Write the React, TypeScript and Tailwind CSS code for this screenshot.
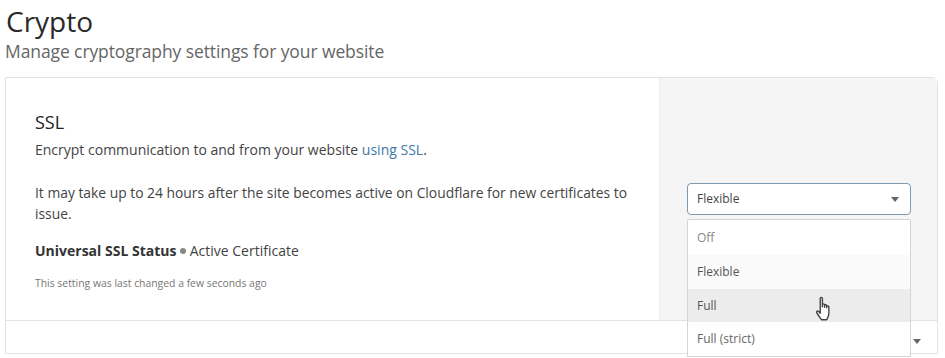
import React from "react";

function Caret({ className = "" }: { className?: string }) {
  return (
    <svg width="8" height="5" viewBox="0 0 8 5" className={className}>
      <path d="M0 0 L8 0 L4 5 Z" fill="#666" />
    </svg>
  );
}

function Hand() {
  return (
    <svg width="18" height="28" viewBox="0 0 16 26" className="absolute left-[127px] top-[76px]">
      <path
        d="M4.5 2.2 C4.5 1 6.5 1 6.5 2.2 L6.5 10 L6.5 8.2 C6.5 7 8.5 7 8.5 8.2 L8.5 10.5 L8.5 9 C8.5 7.9 10.5 7.9 10.5 9 L10.5 11 L10.5 10 C10.5 9 12.5 9 12.5 10 L12.5 16 C12.5 19 11 21 10.5 22 L5.5 22 C4.5 20.5 2 17 1.2 15.5 C0.6 14.4 1.8 13.3 2.8 14.2 L4.5 16 Z"
        fill="#fff"
        stroke="#444"
        strokeWidth="1.3"
        strokeLinejoin="round"
      />
    </svg>
  );
}

export default function App() {
  return (
    <div className="w-[945px] h-[358px] bg-white overflow-hidden relative" style={{ fontFamily: '"Open Sans", "Noto Sans", sans-serif' }}>
      <div className="pl-[5px] pt-[3px]">
        <h1 className="text-[28px] leading-[36px] text-[#2a2a2a] pl-[1px]">Crypto</h1>
        <p className="text-[17.5px] leading-[20px] text-[#666] mt-[2px] tracking-[-0.1px]">Manage cryptography settings for your website</p>
      </div>
      <div className="ml-[5px] mt-[16px] w-[933px] border border-[#e3e3e3] rounded-tr-[6px] rounded-tl-[2px]">
        <div className="flex h-[242px]">
          <div className="flex-1 pl-[29px] pt-[32px] text-[#444]">
            <h2 className="text-[18px] leading-[24px] text-[#222]">SSL</h2>
            <p className="text-[14px] leading-[20px] mt-[6px]">
              Encrypt communication to and from your website{" "}
              <span className="text-[#3f78a8]">using SSL</span>.
            </p>
            <p className="text-[13.85px] leading-[21px] mt-[22px] w-[600px]">
              It may take up to 24 hours after the site becomes active on Cloudflare for new certificates to issue.
            </p>
            <p className="text-[14px] leading-[20px] mt-[17px]">
              <span className="font-bold text-[#333]">Universal SSL Status</span>{" "}
              <span className="inline-block w-[6px] h-[6px] rounded-full bg-[#888] align-middle mb-[2px]"></span>{" "}
              Active Certificate
            </p>
            <p className="text-[10.4px] leading-[14px] text-[#777] mt-[15px]">This setting was last changed a few seconds ago</p>
          </div>
          <div className="w-[278px] bg-[#f5f5f5] border-l border-[#ececec] relative">
            <div className="absolute left-[27px] top-[105px] w-[224px] h-[32px] bg-white border border-[#7d9ab0] rounded-[4px] flex items-center justify-between pl-[9px] pr-[11px]">
              <span className="text-[12px] text-[#444]">Flexible</span>
              <Caret />
            </div>
          </div>
        </div>
        <div className="h-[33px] border-t border-[#e3e3e3] relative">
          <Caret className="absolute left-[907px] top-[18px]" />
        </div>
      </div>
      <div className="absolute left-[687px] top-[219px] w-[224px] bg-white border border-[#d4d4d4] rounded-t-[2px] text-[12px] text-[#555] z-10">
        <div className="h-[35px] flex items-center pl-[9px] text-[#888]">Off</div>
        <div className="h-[34px] flex items-center pl-[9px] bg-[#fafafa]">Flexible</div>
        <div className="h-[33px] flex items-center pl-[9px] bg-[#ececec] relative">
          Full
        </div>
        <div className="h-[34px] flex items-center pl-[9px] text-[#666]">Full (strict)</div>
        <Hand />
      </div>
    </div>
  );
}
